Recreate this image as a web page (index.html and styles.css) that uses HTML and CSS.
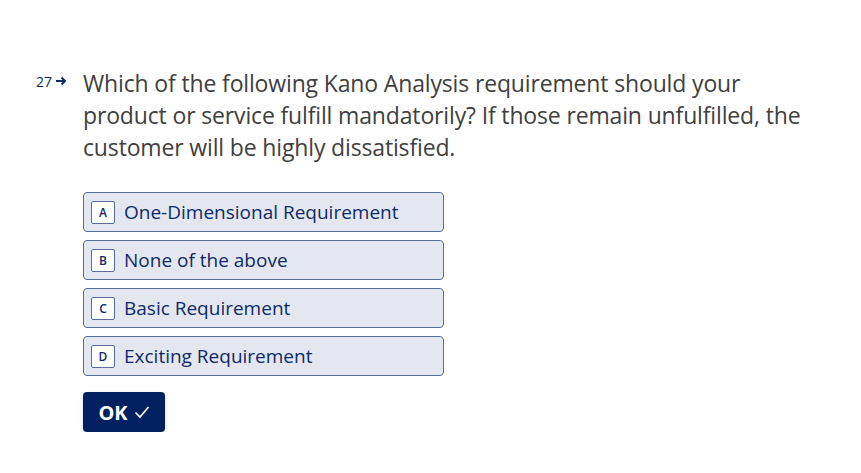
FILE: index.html
```html
<!DOCTYPE html>
<html>
<head>
<meta charset="utf-8">
<link rel="stylesheet" href="styles.css">
</head>
<body>
<div class="page">
  <div class="question">
    <div class="qnum"><span>27</span><svg class="arrow" width="12" height="10" viewBox="0 0 12 10"><path d="M1 5H10M6.5 1.5L10 5L6.5 8.5" fill="none" stroke="#0e2a66" stroke-width="2"/></svg></div>
    <div class="qbody">
      <div class="qtext">Which of the following Kano Analysis requirement should your product or service fulfill mandatorily? If those remain unfulfilled, the customer will be highly dissatisfied.</div>
      <div class="options">
        <div class="option"><span class="key">A</span><span class="label">One-Dimensional Requirement</span></div>
        <div class="option"><span class="key">B</span><span class="label">None of the above</span></div>
        <div class="option"><span class="key">C</span><span class="label">Basic Requirement</span></div>
        <div class="option"><span class="key">D</span><span class="label">Exciting Requirement</span></div>
      </div>
      <button class="ok">OK <svg width="16" height="14" viewBox="0 0 16 14"><path d="M1.5 7.5L6 12L14.5 2" fill="none" stroke="#ffffff" stroke-width="1.6"/></svg></button>
    </div>
  </div>
</div>
</body>
</html>
```
FILE: styles.css
```css
html, body {
  margin: 0;
  padding: 0;
  background: #ffffff;
}
body {
  font-family: "Open Sans", "Noto Sans", sans-serif;
}
.page {
  padding: 67px 0 0 36px;
}
.question {
  display: flex;
}
.qnum {
  width: 47px;
  display: flex;
  align-items: center;
  gap: 3px;
  height: 26px;
  margin-top: 1px;
  font-size: 14px;
  color: #0e2a66;
}
.arrow {
  display: block;
}
.qbody {
  width: 740px;
}
.qtext {
  font-size: 23px;
  line-height: 32px;
  letter-spacing: -0.15px;
  color: #404040;
  width: 730px;
}
.options {
  margin-top: 29px;
  display: flex;
  flex-direction: column;
  gap: 8px;
  width: 361px;
}
.option {
  box-sizing: border-box;
  height: 40px;
  background: #e4e7f0;
  border: 1px solid #5b6d99;
  border-radius: 4px;
  display: flex;
  align-items: center;
  padding-left: 7px;
  gap: 9px;
  color: #0e2a66;
}
.key {
  box-sizing: border-box;
  width: 24px;
  height: 23px;
  background: #ffffff;
  border: 1px solid #5b6d99;
  border-radius: 2px;
  font-size: 12px;
  font-weight: 600;
  display: flex;
  align-items: center;
  justify-content: center;
}
.label {
  font-size: 19px;
}
.ok {
  margin-top: 16px;
  height: 40px;
  width: 82px;
  border: none;
  border-radius: 4px;
  background: #002060;
  color: #ffffff;
  font-family: "Open Sans", "Noto Sans", sans-serif;
  font-size: 20px;
  font-weight: 700;
  display: flex;
  align-items: center;
  justify-content: center;
  gap: 6px;
  padding: 0;
  box-shadow: 0 2px 4px rgba(0,0,0,0.15);
}
```
